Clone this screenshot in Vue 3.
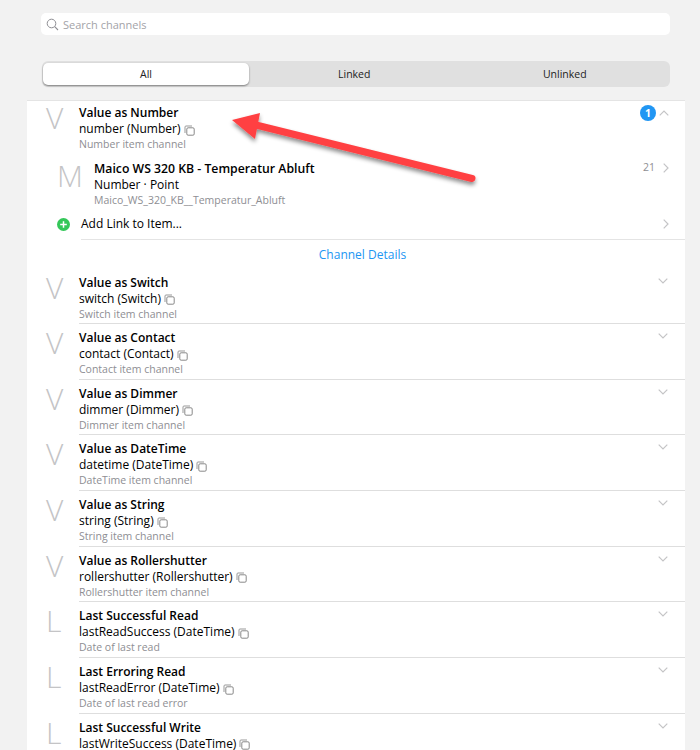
<script setup>
const rows = [
  { l: 'V', t: 'Value as Switch', c: 'switch (Switch)', d: 'Switch item channel' },
  { l: 'V', t: 'Value as Contact', c: 'contact (Contact)', d: 'Contact item channel' },
  { l: 'V', t: 'Value as Dimmer', c: 'dimmer (Dimmer)', d: 'Dimmer item channel' },
  { l: 'V', t: 'Value as DateTime', c: 'datetime (DateTime)', d: 'DateTime item channel' },
  { l: 'V', t: 'Value as String', c: 'string (String)', d: 'String item channel' },
  { l: 'V', t: 'Value as Rollershutter', c: 'rollershutter (Rollershutter)', d: 'Rollershutter item channel' },
  { l: 'L', t: 'Last Successful Read', c: 'lastReadSuccess (DateTime)', d: 'Date of last read' },
  { l: 'L', t: 'Last Erroring Read', c: 'lastReadError (DateTime)', d: 'Date of last read error' },
  { l: 'L', t: 'Last Successful Write', c: 'lastWriteSuccess (DateTime)', d: '' },
]
</script>

<template>
  <div class="page">
    <div class="search">
      <svg class="mag" width="13" height="13" viewBox="0 0 13 13"><circle cx="5.5" cy="5.5" r="4.3" fill="none" stroke="#8e8e93" stroke-width="1"/><path d="M8.7 8.7 12 12" stroke="#8e8e93" stroke-width="1.1" fill="none"/></svg>
      <span>Search channels</span>
    </div>
    <div class="seg">
      <div class="tab active">All</div>
      <div class="tab">Linked</div>
      <div class="tab">Unlinked</div>
    </div>
    <div class="list">
      <div class="row first">
        <div class="letter">V</div>
        <div class="body">
          <div class="title">Value as Number</div>
          <div class="chan"><span>number (Number)</span>
            <svg class="copy" width="11" height="11" viewBox="0 0 11 11"><path d="M1 8V2a1 1 0 0 1 1-1h6" fill="none" stroke="#999" stroke-width="1"/><rect x="2.8" y="2.8" width="7.400" height="7.400" rx="1.3" fill="none" stroke="#888" stroke-width="1"/></svg>
          </div>
          <div class="desc">Number item channel</div>
        </div>
        <div class="badge">1</div>
        <svg class="chev up" width="10" height="6" viewBox="0 0 10 6"><path d="M.7 5.3 5 1l4.3 4.3" fill="none" stroke="#c4c4c6" stroke-width="1.2"/></svg>
      </div>
      <div class="link">
        <div class="letter big">M</div>
        <div class="body">
          <div class="title lg">Maico WS 320 KB - Temperatur Abluft</div>
          <div class="chan"><span>Number · Point</span></div>
          <div class="desc">Maico_WS_320_KB__Temperatur_Abluft</div>
        </div>
        <span class="count">21</span>
        <svg class="chev" width="6" height="10" viewBox="0 0 6 10"><path d="M.7.7 5 5 .7 9.3" fill="none" stroke="#c4c4c6" stroke-width="1.2"/></svg>
      </div>
      <div class="add">
        <span class="plus">
          <svg width="13" height="13" viewBox="0 0 13 13"><circle cx="6.5" cy="6.5" r="6.5" fill="#34c759"/><path d="M6.5 3.2v6.6M3.2 6.5h6.6" stroke="#fff" stroke-width="1.5"/></svg>
        </span>
        <div class="addbody">
          <span>Add Link to Item...</span>
          <svg class="chev" width="6" height="10" viewBox="0 0 6 10"><path d="M.7.7 5 5 .7 9.3" fill="none" stroke="#c4c4c6" stroke-width="1.2"/></svg>
        </div>
      </div>
      <div class="details">Channel Details</div>
      <div v-for="(r, i) in rows" :key="r.t" class="row item" :class="{ lead: i === 0 }">
        <div class="letter">{{ r.l }}</div>
        <div class="body lined">
          <div class="title">{{ r.t }}</div>
          <div class="chan"><span>{{ r.c }}</span>
            <svg class="copy" width="11" height="11" viewBox="0 0 11 11"><path d="M1 8V2a1 1 0 0 1 1-1h6" fill="none" stroke="#999" stroke-width="1"/><rect x="2.8" y="2.8" width="7.400" height="7.400" rx="1.3" fill="none" stroke="#888" stroke-width="1"/></svg>
          </div>
          <div v-if="r.d" class="desc">{{ r.d }}</div>
          <svg class="chev down" width="10" height="6" viewBox="0 0 10 6"><path d="M.7.7 5 5 9.3.7" fill="none" stroke="#c4c4c6" stroke-width="1.2"/></svg>
        </div>
      </div>
    </div>
    <svg class="arrow" width="700" height="750" viewBox="0 0 700 750">
      <defs>
        <filter id="sh" x="-10%" y="-30%" width="120%" height="170%">
          <feDropShadow dx="0" dy="3" stdDeviation="2" flood-color="#000" flood-opacity=".45"/>
        </filter>
      </defs>
      <g filter="url(#sh)">
        <path d="M256 125 472 178.500" stroke="#ff4143" stroke-width="7" stroke-linecap="round" fill="none"/>
        <path d="M232 120 260 113 255 139Z" fill="#ff4143"/>
      </g>
    </svg>
  </div>
</template>

<style>
html, body { margin: 0; background: #f2f2f2; }
</style>

<style scoped>
.page {
  position: relative;
  width: 700px;
  height: 750px;
  overflow: hidden;
  background: #f2f2f2;
  font-family: "Open Sans", "Noto Sans", sans-serif;
  color: #000;
  padding-top: 13px;
  box-sizing: border-box;
}
.search {
  margin-left: 41px;
  width: 629px;
  height: 22px;
  background: #fff;
  border-radius: 5px;
  display: flex;
  align-items: center;
  gap: 4px;
  padding-left: 5px;
  box-sizing: border-box;
  font-size: 11px;
  color: #a3a3a8;
}
.seg {
  margin: 26px 0 0 42px;
  width: 628px;
  height: 26px;
  background: #e0e0e0;
  border-radius: 6px;
  display: flex;
  font-size: 10.5px;
  color: #222;
}
.tab { flex: 1; display: flex; align-items: center; justify-content: center; }
.tab.active {
  flex: none;
  width: 206px;
  background: #fff;
  border-radius: 5px;
  margin: 2px 0 2px 1px;
  box-shadow: 0 1px 2px rgba(0,0,0,.45);
}
.list {
  margin: 13px 0 0 27px;
  width: 658px;
  height: 660px;
  background: #fff;
  border-top: 1px solid #e4e4e4;
  box-sizing: border-box;
}
.row { display: flex; position: relative; }
.first { height: 55px; padding-left: 19px; }
.letter {
  width: 33px;
  flex: none;
  font-size: 30px;
  font-weight: 300;
  line-height: 34px;
  color: #c4c4c6;
}
.letter.big { width: 37px; font-size: 30px; line-height: 34px; padding-top: 3px; }
.body { flex: 1; min-width: 0; position: relative; }
.title {
  font-size: 12px;
  font-weight: 600;
  line-height: 17px;
  margin-top: 3px;
  white-space: nowrap;
}
.title.lg { font-size: 12.25px; margin-top: 4px; }
.chan { font-size: 12px; line-height: 16px; display: flex; align-items: center; gap: 3px; white-space: pre; }
.desc { font-size: 10.5px; line-height: 14px; color: #8e8e93; white-space: nowrap; }
.copy { margin-top: 2px; }
.badge {
  position: absolute;
  left: 613px;
  top: 4px;
  width: 16px;
  height: 16px;
  border-radius: 50%;
  background: #2196f3;
  color: #fff;
  font-size: 10.5px;
  font-weight: 700;
  line-height: 16px;
  text-align: center;
}
.up { position: absolute; left: 632px; top: 9px; }
.link { display: flex; height: 56px; margin-left: 30px; position: relative; }
.count { position: absolute; right: 30px; top: 4px; font-size: 10.5px; color: #8e8e93; }
.link .chev { position: absolute; right: 16px; top: 7px; }
.add { display: flex; align-items: center; height: 30px; margin-top: -3px; padding-left: 30px; }
.plus { width: 24px; flex: none; display: flex; }
.addbody {
  flex: 1;
  height: 100%;
  display: flex;
  align-items: center;
  justify-content: space-between;
  padding-right: 16px;
  font-size: 12px;
  border-bottom: 1px solid #e4e4e4;
}
.details { height: 29.5px; line-height: 32px; text-align: center; font-size: 12px; color: #2196f3; padding-left: 13px; }
.item { height: 55.7px; padding-left: 19px; }
.item.lead { height: 55.5px; }
.item .letter { padding-top: 2px; }
.item .title { margin-top: 5px; }
.lined { border-bottom: 1px solid #dedede; box-sizing: border-box; }
.down { position: absolute; right: 17px; top: 9px; }
.arrow { position: absolute; left: 0; top: 0; pointer-events: none; }
</style>
